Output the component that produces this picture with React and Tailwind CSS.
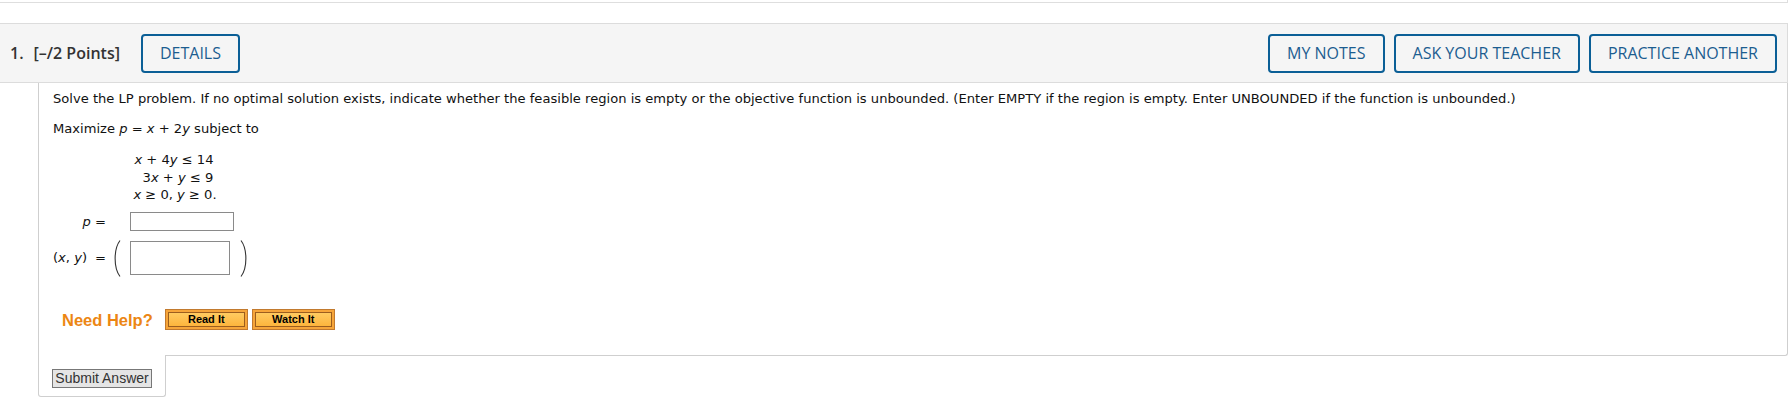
import React from "react";

const HeaderButton = ({ children }) => (
  <button
    type="button"
    className="h-[39px] px-[17px] border-2 border-[#0b5f96] rounded-[4px] bg-transparent text-[16px] font-medium leading-none text-[#1c5d90] whitespace-nowrap"
    style={{ fontFamily: '"Open Sans", sans-serif' }}
  >
    {children}
  </button>
);

const HelpButton = ({ label }) => (
  <span className="inline-flex w-[83px] h-[21px] p-[2px] border border-[#c27a2e] bg-[#f6a53a]">
    <span className="flex-1 flex items-center justify-center border border-[#9c5e1f] bg-gradient-to-b from-[#ffcb60] to-[#fdb53c] text-[11px] font-bold text-black leading-none font-['Liberation_Sans',Arial,sans-serif]">
      {label}
    </span>
  </span>
);

const Paren = ({ flip }) => (
  <svg width="8" height="37" viewBox="0 0 8 37" className={flip ? "scale-x-[-1]" : ""}>
    <path d="M7 0.5 C0.5 9 0.5 28 7 36.5" fill="none" stroke="#333" strokeWidth="1.1" />
  </svg>
);

export default function App() {
  return (
    <div className="w-full h-[406px] bg-white overflow-hidden">
      <div className="w-[1788px]">
        {/* strip above the question */}
        <div className="h-[3px] border-b border-r border-[#dedede]" />

        {/* question header */}
        <div
          className="mt-[20px] h-[60px] flex items-center border-t border-b border-r border-[#dcdcdc] bg-[#f5f5f5] pr-[10px]"
          style={{ fontFamily: '"Open Sans", sans-serif' }}
        >
          <span className="ml-[10px] text-[16px] font-semibold text-[#333]">1.</span>
          <span className="ml-[10px] text-[16px] font-semibold text-[#333]">[–/2 Points]</span>
          <div className="ml-[21px]">
            <HeaderButton>DETAILS</HeaderButton>
          </div>
          <div className="ml-auto flex items-center gap-[9px]">
            <HeaderButton>MY NOTES</HeaderButton>
            <HeaderButton>ASK YOUR TEACHER</HeaderButton>
            <HeaderButton>PRACTICE ANOTHER</HeaderButton>
          </div>
        </div>

        {/* question body */}
        <div className="ml-[38px] h-[273px] border-l border-r border-b border-[#cfcfcf] rounded-br-[3px] pl-[14px] pt-[8px] text-[13.1px] leading-[16px] text-[#111] font-['DejaVu_Sans',Verdana,sans-serif]">
          <p>
            Solve the LP problem. If no optimal solution exists, indicate whether the feasible region is empty or the objective function is unbounded. (Enter EMPTY if the region is empty. Enter UNBOUNDED if the function is unbounded.)
          </p>
          <p className="mt-[14px]">
            Maximize <i>p</i> = <i>x</i> + 2<i>y</i> subject to
          </p>

          <div className="mt-[14px] ml-[78px] w-[86px] flex flex-col items-center leading-[17.5px]">
            <span>
              <i>x</i> + 4<i>y</i> ≤ 14
            </span>
            <span className="pl-[8px]">
              3<i>x</i> + <i>y</i> ≤ 9
            </span>
            <span className="pl-[2px]">
              <i>x</i> ≥ 0, <i>y</i> ≥ 0.
            </span>
          </div>

          <div className="mt-[8px] flex items-center h-[20px]">
            <span className="w-[54px] text-right pr-[1px]">
              <i>p</i> =
            </span>
            <span className="ml-[23px] w-[104px] h-[19px] border border-[#8a8a8a] bg-white" />
          </div>

          <div className="mt-[8px] flex items-center h-[37px]">
            <span className="w-[54px] flex justify-between pr-[1px]">
              <span>
                (<i>x</i>, <i>y</i>)
              </span>
              <span>=</span>
            </span>
            <span className="ml-[6px] flex items-center">
              <Paren />
              <span className="ml-[9px] w-[100px] h-[34px] border border-[#8a8a8a] bg-white" />
              <span className="ml-[10px]">
                <Paren flip />
              </span>
            </span>
          </div>

          <div className="mt-[32px] ml-[9px] flex items-center gap-[4px] h-[22px]">
            <span className="text-[16.5px] font-bold text-[#ec8613] font-['Liberation_Sans',Arial,sans-serif] mr-[8px]">
              Need Help?
            </span>
            <HelpButton label="Read It" />
            <HelpButton label="Watch It" />
          </div>
        </div>

        {/* submit tab */}
        <div className="ml-[38px] -mt-px w-[128px] h-[42px] border-l border-r border-b border-[#cfcfcf] rounded-b-[3px] bg-white pl-[13px] pt-[10px]">
          <button
            type="button"
            className="w-[100px] h-[19px] border border-[#777] bg-[#e5e5e5] text-[14px] leading-none text-[#333] font-['Liberation_Sans',Arial,sans-serif] whitespace-nowrap"
          >
            Submit Answer
          </button>
        </div>
      </div>
    </div>
  );
}
